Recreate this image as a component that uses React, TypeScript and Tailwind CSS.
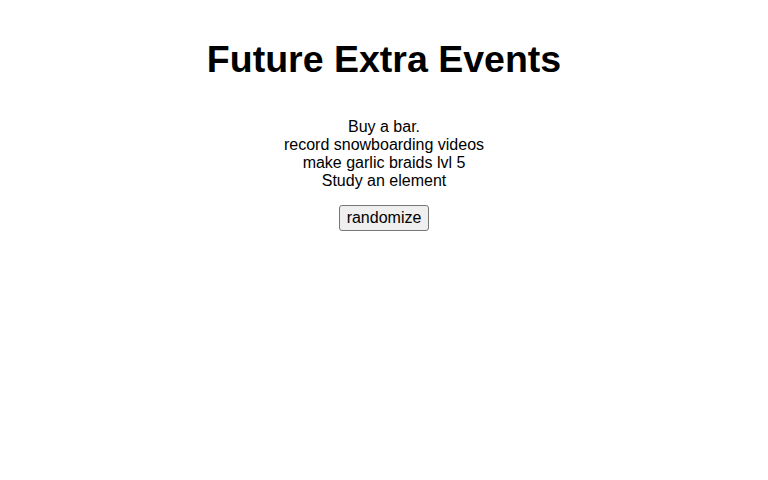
const EVENTS = [
  'Buy a bar.',
  'record snowboarding videos',
  'make garlic braids lvl 5',
  'Study an element',
];

export default function App() {
  return (
    <div className="min-h-screen bg-white text-black font-['Liberation_Sans',Arial,sans-serif] flex flex-col items-center">
      <h1 className="mt-[38px] text-[37.5px] leading-[42px] font-bold">Future Extra Events</h1>
      <ul className="mt-[38px] flex flex-col items-center text-[16px] leading-[18px]">
        {EVENTS.map((e) => (
          <li key={e}>{e}</li>
        ))}
      </ul>
      <button className="mt-[15px] px-[7px] pt-[3px] pb-[3px] text-[16px] leading-[18px] bg-[#efefef] border border-[#767676] rounded-[3px] text-black">
        randomize
      </button>
    </div>
  );
}
